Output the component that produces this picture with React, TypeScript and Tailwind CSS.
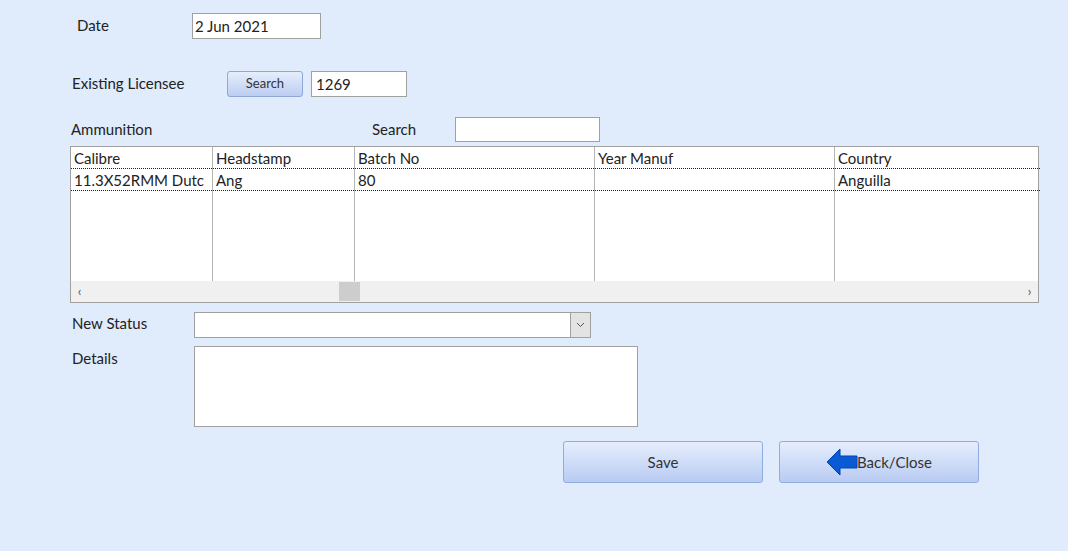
const cols = [
  { name: 'Calibre', w: 142, v: '11.3X52RMM Dutc' },
  { name: 'Headstamp', w: 142, v: 'Ang' },
  { name: 'Batch No', w: 240, v: '80' },
  { name: 'Year Manuf', w: 240, v: '' },
  { name: 'Country', w: 205, v: 'Anguilla' },
];

export default function App() {
  return (
    <div
      className="w-[1068px] h-[551px] bg-[#e0ebfb] text-[15px] text-[#222] overflow-hidden"
      style={{ fontFamily: 'Lato, "Open Sans", sans-serif' }}
    >
      {/* Date */}
      <div className="flex items-center pt-[13px]">
        <span className="ml-[77px] w-[115px] -mt-[2px]">Date</span>
        <div className="w-[129px] h-[26px] bg-white border border-[#a0a0a0] px-[2px] flex items-center">2 Jun 2021</div>
      </div>

      {/* Existing Licensee */}
      <div className="flex items-center mt-[32px]">
        <span className="ml-[72px] w-[155px] -mt-[2px]">Existing Licensee</span>
        <button className="w-[76px] h-[26px] rounded-[3px] border border-[#8fa8d8] bg-gradient-to-b from-[#e6eefc] to-[#bccdf1] text-[13px] text-[#333]">
          Search
        </button>
        <div className="ml-[8px] w-[96px] h-[26px] bg-white border border-[#a0a0a0] px-[4px] flex items-center">1269</div>
      </div>

      {/* Ammunition */}
      <div className="flex items-center mt-[20px]">
        <span className="ml-[71px] w-[301px]">Ammunition</span>
        <span className="w-[83px]">Search</span>
        <div className="w-[145px] h-[25px] bg-white border border-[#a0a0a0]" />
      </div>

      {/* Grid */}
      <div className="ml-[70px] mt-[4px] w-[969px] h-[157px] bg-white border border-[#a0a0a0] flex flex-col">
        <div className="flex flex-1">
          {cols.map((c, i) => (
            <div key={c.name} className={`flex flex-col shrink-0 ${i < cols.length - 1 ? 'border-r border-[#b5b5b5]' : ''}`} style={{ width: c.w }}>
              <div className="h-[22px] px-[3px] leading-[22px] border-b border-dotted border-[#222] whitespace-nowrap overflow-hidden">{c.name}</div>
              <div className="h-[22px] px-[3px] leading-[22px] border-b border-dotted border-[#222] whitespace-nowrap overflow-hidden">{c.v}</div>
            </div>
          ))}
        </div>
        <div className="h-[21px] bg-[#f0f0f0] flex items-center text-[#555] text-[13px]">
          <span className="w-[17px] text-center">‹</span>
          <div className="ml-[251px] w-[21px] h-[19px] bg-[#cdcdcd]" />
          <span className="ml-auto w-[17px] text-center">›</span>
        </div>
      </div>

      {/* New Status */}
      <div className="flex items-center mt-[9px]">
        <span className="ml-[72px] w-[122px] -mt-[4px]">New Status</span>
        <div className="w-[397px] h-[26px] bg-white border border-[#a0a0a0] flex justify-end">
          <div className="w-[20px] h-full bg-[#e3e3e3] border-l border-[#a0a0a0] flex items-center justify-center">
            <svg width="9" height="6" viewBox="0 0 9 6"><path d="M1 1l3.5 3.5L8 1" stroke="#555" fill="none" /></svg>
          </div>
        </div>
      </div>

      {/* Details */}
      <div className="flex items-start mt-[8px]">
        <span className="ml-[72px] w-[122px] mt-[1px]">Details</span>
        <div className="w-[444px] h-[81px] bg-white border border-[#a0a0a0]" />
      </div>

      {/* Buttons */}
      <div className="flex mt-[14px] ml-[563px] gap-[16px]">
        <button className="w-[200px] h-[42px] rounded-[3px] border border-[#92acdf] bg-gradient-to-b from-[#e6eefc] to-[#b8cbf2] text-[#333]">
          Save
        </button>
        <button className="w-[200px] h-[42px] rounded-[3px] border border-[#92acdf] bg-gradient-to-b from-[#e6eefc] to-[#b8cbf2] text-[#333] flex items-center justify-center">
          <svg width="32" height="28" viewBox="0 0 32 28" className="-mr-[1px]">
            <path d="M1 14L14 1v7h17v12H14v7z" fill="#0a5ad6" stroke="#0042b0" strokeWidth="1" />
          </svg>
          Back/Close
        </button>
      </div>
    </div>
  );
}
